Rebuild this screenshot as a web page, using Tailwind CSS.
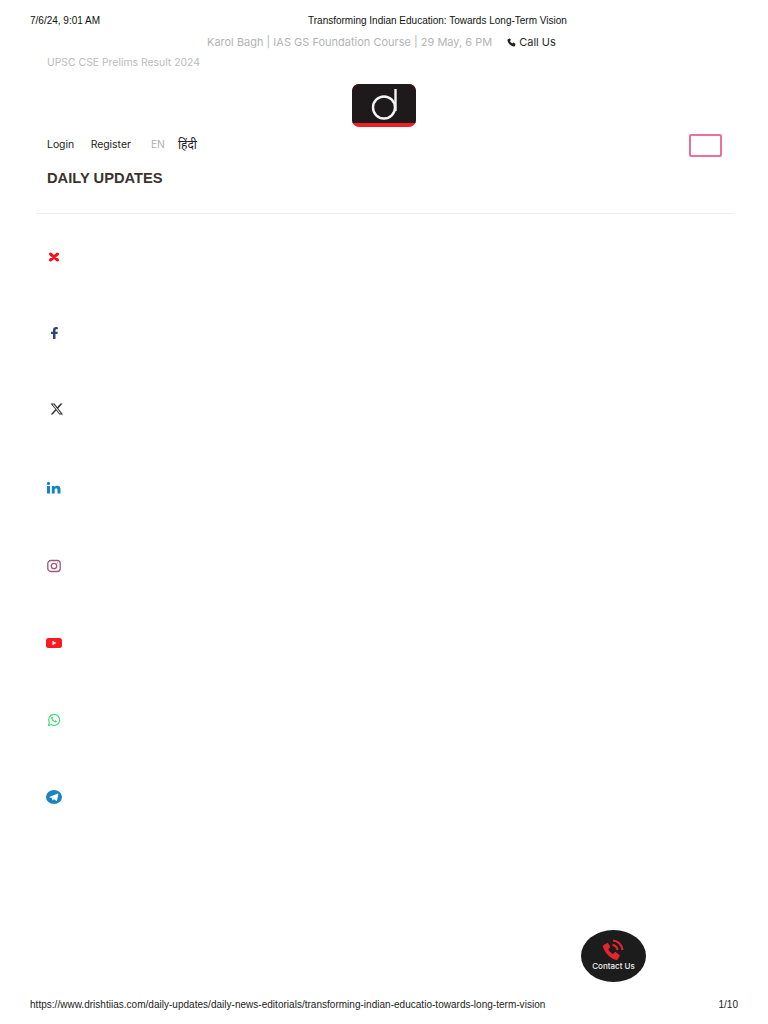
<!doctype html>
<html lang="en">
<head>
<meta charset="utf-8">
<title>Transforming Indian Education</title>
<script src="https://cdn.jsdelivr.net/npm/@tailwindcss/browser@4"></script>
</head>
<body class="bg-white">
<div class="relative w-[768px] h-[1024px] overflow-hidden bg-white font-['Liberation_Sans',sans-serif]">
  <header class="h-[15px] mt-[13px] relative flex items-center px-[30px] text-[10px] leading-[15px] text-[#111]">
    <span>7/6/24, 9:01 AM</span>
    <span class="absolute left-[308px]">Transforming Indian Education: Towards Long-Term Vision</span>
  </header>

  <div class="mt-[5px] h-[18px] flex items-center pl-[207px] font-['Inter','Noto_Sans',sans-serif] text-[11px] leading-[18px]">
    <span class="text-[#b4b4b4]">Karol Bagh | IAS GS Foundation Course | 29 May, 6 PM</span>
    <svg class="ml-[15px] mr-[3px] w-[9px] h-[9px]" viewBox="0 0 24 24" fill="#222"><path d="M6.6 1.5 2.7 3.1C1.6 3.6 1 4.7 1.2 5.9c1.4 8.4 8.5 15.5 16.9 16.9 1.2.2 2.3-.4 2.8-1.5l1.6-3.9c.3-.7.1-1.4-.5-1.9l-3.7-2.9c-.6-.5-1.4-.4-2 .1l-2 2c-2.8-1.5-5-3.7-6.5-6.5l2-2c.5-.6.6-1.4.1-2L7.9 1.9c-.3-.4-.8-.6-1.3-.4Z"/></svg>
    <span class="text-[#2a2a2a]">Call Us</span>
  </div>

  <div class="mt-[4px] h-[15px] pl-[47px] font-['Inter','Noto_Sans',sans-serif] text-[10.400px] leading-[15px] text-[#bcbcbc]">UPSC CSE Prelims Result 2024</div>

  <div class="mt-[14px] flex justify-center">
    <svg class="w-[64px] h-[43px]" viewBox="0 0 64 43">
      <defs><clipPath id="lg"><rect width="64" height="43" rx="7"/></clipPath></defs>
      <g clip-path="url(#lg)">
        <rect width="64" height="43" fill="#ee2128"/>
        <path d="M0 0H64V38.500Q64 39 58 39H6Q0 39 0 38.500Z" fill="#1e1a1b"/>
      </g>
      <circle cx="32" cy="23.500" r="11" fill="none" stroke="#f4f4f4" stroke-width="2.400"/>
      <path d="M43.500 5V27" fill="none" stroke="#f4f4f4" stroke-width="2.400"/>
    </svg>
  </div>

  <nav class="mt-[6px] h-[23px] relative flex items-center pl-[47px] font-['Inter','Noto_Sans',sans-serif] text-[10.400px] text-[#1c1c1c]">
    <span>Login</span>
    <span class="ml-[16.500px]">Register</span>
    <span class="ml-[20px] text-[#b0b0b0]">EN</span>
    <span class="ml-[13px] font-['Noto_Sans','Noto_Sans_CJK_SC',sans-serif] text-[12px]">हिंदी</span>
    <div class="absolute left-[689px] top-[1px] w-[33px] h-[23px] border-2 border-[#ee7098] rounded-[2px]"></div>
  </nav>

  <h1 class="mt-[11px] h-[22px] pl-[47px] font-bold text-[14.700px] leading-[22px] text-[#3a332d]">DAILY UPDATES</h1>

  <div class="mt-[24px] ml-[36px] w-[697px] h-px bg-[#eeeeee]"></div>

  <ul class="pl-[46px] flex flex-col">
    <li class="mt-[35px] h-[16px] flex items-center">
      <svg class="w-[16px] h-[16px]" viewBox="0 0 16 16"><path d="M4.500 5 11.500 11M11.500 5 4.500 11" stroke="#fb0f1c" stroke-width="3" stroke-linecap="round"/></svg>
    </li>
    <li class="mt-[60px] h-[16px] flex items-center">
      <svg class="w-[16px] h-[16px]" viewBox="0 0 16 16"><path fill="#2f4578" d="M9.500 14V9h1.900l.4-2.300H9.500V5.400c0-.7.3-1.100 1.200-1.100h1.100V2.200C11.400 2.100 10.700 2 10 2 8.200 2 7 3.100 7 5v1.700H5V9h2v5h2.500Z"/></svg>
    </li>
    <li class="mt-[60px] h-[16px] flex items-center">
      <svg class="w-[20px] h-[16px]" viewBox="0 0 20 16"><path fill="#333" d="M14.500 2.500h2l-4.300 4.900 5 6.100h-3.900l-3.100-4-3.500 4H4.700l4.600-5.200-4.800-5.800h4l2.800 3.600 3.200-3.600Zm-.7 10h1.100L7.800 3.500H6.600l7.200 9Z"/></svg>
    </li>
    <li class="mt-[63px] h-[16px] flex items-center">
      <svg class="w-[16px] h-[16px]" viewBox="0 0 16 16"><path fill="#1383c2" d="M1 6h3v7.500H1V6Zm1.500-4.200a1.600 1.600 0 1 1 0 3.200 1.600 1.600 0 0 1 0-3.200ZM5.800 6h2.800v1.100c.5-.8 1.400-1.300 2.600-1.300 2.500 0 3.300 1.500 3.300 3.900v3.800h-3V10.200c0-1.100-.3-1.900-1.300-1.900s-1.500.8-1.500 1.900v3.300H5.800V6Z"/></svg>
    </li>
    <li class="mt-[62px] h-[16px] flex items-center">
      <svg class="w-[16px] h-[16px]" viewBox="0 0 16 16" fill="none" stroke="#9c5a78" stroke-width="1.300"><rect x="1.800" y="2.500" width="12.400" height="11" rx="3"/><circle cx="8" cy="8" r="2.700"/><circle cx="11.600" cy="4.800" r=".5" fill="#9c5a78" stroke="none"/></svg>
    </li>
    <li class="mt-[61px] h-[16px] flex items-center">
      <svg class="w-[16px] h-[16px]" viewBox="0 0 16 16"><rect y="3" width="16" height="10" rx="2.500" fill="#fb1a1f"/><path d="M6.500 5.800v4.400L10.300 8 6.500 5.800Z" fill="#fff"/></svg>
    </li>
    <li class="mt-[61px] h-[16px] flex items-center">
      <svg class="w-[16px] h-[16px]" viewBox="0 0 16 16"><path d="M2.500 13.500l.8-3A5.500 5.500 0 1 1 5.500 12.700L2.500 13.500Z" fill="none" stroke="#45dd76" stroke-width="1.200" stroke-linejoin="round"/><path d="M6 4.800c-.6.300-1 1-.8 1.800.4 1.700 2 3.400 3.900 3.900.9.200 1.600-.2 1.900-.9.100-.3 0-.5-.2-.6l-1.200-.6c-.2-.1-.4 0-.5.200l-.3.400c-.9-.3-1.700-1.100-2.100-2l.4-.4c.1-.1.200-.3.100-.5l-.5-1.100c-.1-.3-.4-.3-.7-.2Z" fill="#45dd76"/></svg>
    </li>
    <li class="mt-[61px] h-[16px] flex items-center">
      <svg class="w-[16px] h-[16px]" viewBox="0 0 16 16"><ellipse cx="8" cy="8" rx="8" ry="7" fill="#1b83c4"/><path d="M3.200 7.900 11.800 4.500c.4-.1.700.1.600.6l-1.400 6.300c-.1.500-.4.600-.8.400L8 10.300l-1 1c-.2.200-.4.200-.5-.1l-.7-2.200-2.500-.8c-.5-.1-.5-.3-.1-.3Z" fill="#fff"/></svg>
    </li>
  </ul>

  <div class="absolute left-[581px] top-[930px] w-[65px] h-[52px] rounded-[50%] bg-[#1c1c1c] flex flex-col items-center">
    <svg class="mt-[9px] -ml-[2px] w-[24px] h-[22px]" viewBox="0 0 24 22" fill="none">
      <path d="M4.600 3 1.900 4.500C1 5 .7 5.900 1 6.900c1.800 5.300 6.400 10 11.800 12 1 .4 1.900 0 2.400-.8l1.500-2.600c.3-.5.200-1-.2-1.400l-3-2.300c-.5-.4-1.100-.3-1.500.1l-1.400 1.500c-2-1-3.700-2.700-4.700-4.700l1.500-1.400c.4-.4.500-1 .1-1.500L5.900 3.200C5.600 2.800 5 2.700 4.600 3Z" fill="#e5252b" transform="translate(1 1) scale(1.05)"/>
      <path d="M11.500 6c2.600.3 4.700 2.400 5 5M12 1.500c5 .4 9 4.500 9.500 9.500" stroke="#e5252b" stroke-width="2.200"/>
    </svg>
    <span class="mt-0 font-['Inter','Noto_Sans',sans-serif] font-medium text-[8px] leading-[10px] text-[#f2f2f2]">Contact Us</span>
  </div>

  <footer class="absolute left-[30px] right-[30px] top-[996px] h-[16px] flex items-center justify-between text-[10px] text-[#222]">
    <span class="tracking-[0.02px]">https://www.drishtiias.com/daily-updates/daily-news-editorials/transforming-indian-educatio-towards-long-term-vision</span>
    <span>1/10</span>
  </footer>
</div>
</body>
</html>
